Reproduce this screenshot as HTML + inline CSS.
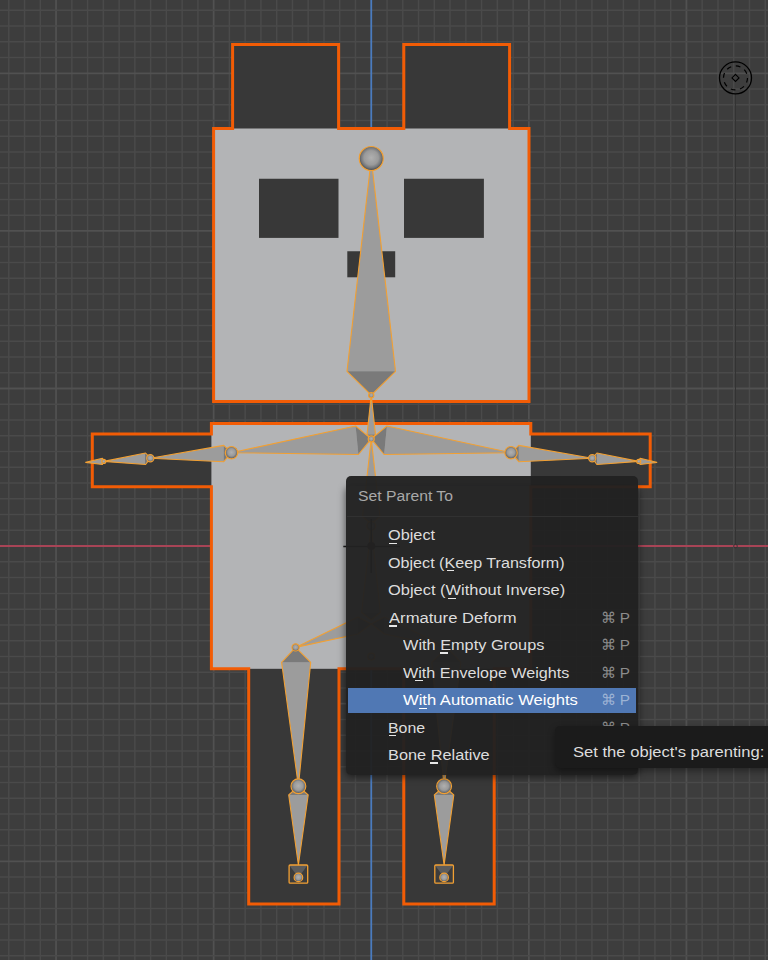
<!DOCTYPE html><html><head><meta charset="utf-8"><style>html,body{margin:0;padding:0;width:768px;height:960px;overflow:hidden;background:#3d3d3d}.t{position:absolute;font-family:"Liberation Sans",sans-serif;white-space:nowrap;line-height:1;}.mi{color:#e6e6e6;font-size:15.5px}u{text-decoration:underline;text-underline-offset:3px;text-decoration-thickness:1.2px}</style></head><body><svg width="768" height="960" viewBox="0 0 768 960" style="position:absolute;left:0;top:0"><defs><radialGradient id="sph" cx="0.5" cy="0.47" r="0.5"><stop offset="0" stop-color="#b0b0b0"/><stop offset="0.6" stop-color="#9a9a9a"/><stop offset="0.85" stop-color="#747679"/><stop offset="1" stop-color="#4e535a"/></radialGradient></defs><rect width="768" height="960" fill="#3d3d3d"/><line x1="-6.99" y1="0" x2="-6.99" y2="960" stroke="#4a4a4a" stroke-width="1.5"/><line x1="8.77" y1="0" x2="8.77" y2="960" stroke="#4a4a4a" stroke-width="1.5"/><line x1="24.53" y1="0" x2="24.53" y2="960" stroke="#4a4a4a" stroke-width="1.5"/><line x1="40.29" y1="0" x2="40.29" y2="960" stroke="#4a4a4a" stroke-width="1.5"/><line x1="56.05" y1="0" x2="56.05" y2="960" stroke="#515151" stroke-width="1.8"/><line x1="71.81" y1="0" x2="71.81" y2="960" stroke="#4a4a4a" stroke-width="1.5"/><line x1="87.57" y1="0" x2="87.57" y2="960" stroke="#4a4a4a" stroke-width="1.5"/><line x1="103.33" y1="0" x2="103.33" y2="960" stroke="#4a4a4a" stroke-width="1.5"/><line x1="119.09" y1="0" x2="119.09" y2="960" stroke="#4a4a4a" stroke-width="1.5"/><line x1="134.85" y1="0" x2="134.85" y2="960" stroke="#4a4a4a" stroke-width="1.5"/><line x1="150.61" y1="0" x2="150.61" y2="960" stroke="#4a4a4a" stroke-width="1.5"/><line x1="166.37" y1="0" x2="166.37" y2="960" stroke="#4a4a4a" stroke-width="1.5"/><line x1="182.13" y1="0" x2="182.13" y2="960" stroke="#4a4a4a" stroke-width="1.5"/><line x1="197.89" y1="0" x2="197.89" y2="960" stroke="#4a4a4a" stroke-width="1.5"/><line x1="213.65" y1="0" x2="213.65" y2="960" stroke="#515151" stroke-width="1.8"/><line x1="229.41" y1="0" x2="229.41" y2="960" stroke="#4a4a4a" stroke-width="1.5"/><line x1="245.17" y1="0" x2="245.17" y2="960" stroke="#4a4a4a" stroke-width="1.5"/><line x1="260.93" y1="0" x2="260.93" y2="960" stroke="#4a4a4a" stroke-width="1.5"/><line x1="276.69" y1="0" x2="276.69" y2="960" stroke="#4a4a4a" stroke-width="1.5"/><line x1="292.45" y1="0" x2="292.45" y2="960" stroke="#4a4a4a" stroke-width="1.5"/><line x1="308.21" y1="0" x2="308.21" y2="960" stroke="#4a4a4a" stroke-width="1.5"/><line x1="323.97" y1="0" x2="323.97" y2="960" stroke="#4a4a4a" stroke-width="1.5"/><line x1="339.73" y1="0" x2="339.73" y2="960" stroke="#4a4a4a" stroke-width="1.5"/><line x1="355.49" y1="0" x2="355.49" y2="960" stroke="#4a4a4a" stroke-width="1.5"/><line x1="387.01" y1="0" x2="387.01" y2="960" stroke="#4a4a4a" stroke-width="1.5"/><line x1="402.77" y1="0" x2="402.77" y2="960" stroke="#4a4a4a" stroke-width="1.5"/><line x1="418.53" y1="0" x2="418.53" y2="960" stroke="#4a4a4a" stroke-width="1.5"/><line x1="434.29" y1="0" x2="434.29" y2="960" stroke="#4a4a4a" stroke-width="1.5"/><line x1="450.05" y1="0" x2="450.05" y2="960" stroke="#4a4a4a" stroke-width="1.5"/><line x1="465.81" y1="0" x2="465.81" y2="960" stroke="#4a4a4a" stroke-width="1.5"/><line x1="481.57" y1="0" x2="481.57" y2="960" stroke="#4a4a4a" stroke-width="1.5"/><line x1="497.33" y1="0" x2="497.33" y2="960" stroke="#4a4a4a" stroke-width="1.5"/><line x1="513.09" y1="0" x2="513.09" y2="960" stroke="#4a4a4a" stroke-width="1.5"/><line x1="528.85" y1="0" x2="528.85" y2="960" stroke="#515151" stroke-width="1.8"/><line x1="544.61" y1="0" x2="544.61" y2="960" stroke="#4a4a4a" stroke-width="1.5"/><line x1="560.37" y1="0" x2="560.37" y2="960" stroke="#4a4a4a" stroke-width="1.5"/><line x1="576.13" y1="0" x2="576.13" y2="960" stroke="#4a4a4a" stroke-width="1.5"/><line x1="591.89" y1="0" x2="591.89" y2="960" stroke="#4a4a4a" stroke-width="1.5"/><line x1="607.65" y1="0" x2="607.65" y2="960" stroke="#4a4a4a" stroke-width="1.5"/><line x1="623.41" y1="0" x2="623.41" y2="960" stroke="#4a4a4a" stroke-width="1.5"/><line x1="639.17" y1="0" x2="639.17" y2="960" stroke="#4a4a4a" stroke-width="1.5"/><line x1="654.93" y1="0" x2="654.93" y2="960" stroke="#4a4a4a" stroke-width="1.5"/><line x1="670.69" y1="0" x2="670.69" y2="960" stroke="#4a4a4a" stroke-width="1.5"/><line x1="686.45" y1="0" x2="686.45" y2="960" stroke="#515151" stroke-width="1.8"/><line x1="702.21" y1="0" x2="702.21" y2="960" stroke="#4a4a4a" stroke-width="1.5"/><line x1="717.97" y1="0" x2="717.97" y2="960" stroke="#4a4a4a" stroke-width="1.5"/><line x1="733.73" y1="0" x2="733.73" y2="960" stroke="#4a4a4a" stroke-width="1.5"/><line x1="749.49" y1="0" x2="749.49" y2="960" stroke="#4a4a4a" stroke-width="1.5"/><line x1="765.25" y1="0" x2="765.25" y2="960" stroke="#4a4a4a" stroke-width="1.5"/><line x1="781.01" y1="0" x2="781.01" y2="960" stroke="#4a4a4a" stroke-width="1.5"/><line x1="0" y1="-5.5" x2="768" y2="-5.5" stroke="#4a4a4a" stroke-width="1.5"/><line x1="0" y1="10.26" x2="768" y2="10.26" stroke="#4a4a4a" stroke-width="1.5"/><line x1="0" y1="26.02" x2="768" y2="26.02" stroke="#4a4a4a" stroke-width="1.5"/><line x1="0" y1="41.78" x2="768" y2="41.78" stroke="#4a4a4a" stroke-width="1.5"/><line x1="0" y1="57.54" x2="768" y2="57.54" stroke="#4a4a4a" stroke-width="1.5"/><line x1="0" y1="73.3" x2="768" y2="73.3" stroke="#515151" stroke-width="1.8"/><line x1="0" y1="89.06" x2="768" y2="89.06" stroke="#4a4a4a" stroke-width="1.5"/><line x1="0" y1="104.82" x2="768" y2="104.82" stroke="#4a4a4a" stroke-width="1.5"/><line x1="0" y1="120.58" x2="768" y2="120.58" stroke="#4a4a4a" stroke-width="1.5"/><line x1="0" y1="136.34" x2="768" y2="136.34" stroke="#4a4a4a" stroke-width="1.5"/><line x1="0" y1="152.1" x2="768" y2="152.1" stroke="#4a4a4a" stroke-width="1.5"/><line x1="0" y1="167.86" x2="768" y2="167.86" stroke="#4a4a4a" stroke-width="1.5"/><line x1="0" y1="183.62" x2="768" y2="183.62" stroke="#4a4a4a" stroke-width="1.5"/><line x1="0" y1="199.38" x2="768" y2="199.38" stroke="#4a4a4a" stroke-width="1.5"/><line x1="0" y1="215.14" x2="768" y2="215.14" stroke="#4a4a4a" stroke-width="1.5"/><line x1="0" y1="230.9" x2="768" y2="230.9" stroke="#515151" stroke-width="1.8"/><line x1="0" y1="246.66" x2="768" y2="246.66" stroke="#4a4a4a" stroke-width="1.5"/><line x1="0" y1="262.42" x2="768" y2="262.42" stroke="#4a4a4a" stroke-width="1.5"/><line x1="0" y1="278.18" x2="768" y2="278.18" stroke="#4a4a4a" stroke-width="1.5"/><line x1="0" y1="293.94" x2="768" y2="293.94" stroke="#4a4a4a" stroke-width="1.5"/><line x1="0" y1="309.7" x2="768" y2="309.7" stroke="#4a4a4a" stroke-width="1.5"/><line x1="0" y1="325.46" x2="768" y2="325.46" stroke="#4a4a4a" stroke-width="1.5"/><line x1="0" y1="341.22" x2="768" y2="341.22" stroke="#4a4a4a" stroke-width="1.5"/><line x1="0" y1="356.98" x2="768" y2="356.98" stroke="#4a4a4a" stroke-width="1.5"/><line x1="0" y1="372.74" x2="768" y2="372.74" stroke="#4a4a4a" stroke-width="1.5"/><line x1="0" y1="388.5" x2="768" y2="388.5" stroke="#515151" stroke-width="1.8"/><line x1="0" y1="404.26" x2="768" y2="404.26" stroke="#4a4a4a" stroke-width="1.5"/><line x1="0" y1="420.02" x2="768" y2="420.02" stroke="#4a4a4a" stroke-width="1.5"/><line x1="0" y1="435.78" x2="768" y2="435.78" stroke="#4a4a4a" stroke-width="1.5"/><line x1="0" y1="451.54" x2="768" y2="451.54" stroke="#4a4a4a" stroke-width="1.5"/><line x1="0" y1="467.3" x2="768" y2="467.3" stroke="#4a4a4a" stroke-width="1.5"/><line x1="0" y1="483.06" x2="768" y2="483.06" stroke="#4a4a4a" stroke-width="1.5"/><line x1="0" y1="498.82" x2="768" y2="498.82" stroke="#4a4a4a" stroke-width="1.5"/><line x1="0" y1="514.58" x2="768" y2="514.58" stroke="#4a4a4a" stroke-width="1.5"/><line x1="0" y1="530.34" x2="768" y2="530.34" stroke="#4a4a4a" stroke-width="1.5"/><line x1="0" y1="561.86" x2="768" y2="561.86" stroke="#4a4a4a" stroke-width="1.5"/><line x1="0" y1="577.62" x2="768" y2="577.62" stroke="#4a4a4a" stroke-width="1.5"/><line x1="0" y1="593.38" x2="768" y2="593.38" stroke="#4a4a4a" stroke-width="1.5"/><line x1="0" y1="609.14" x2="768" y2="609.14" stroke="#4a4a4a" stroke-width="1.5"/><line x1="0" y1="624.9" x2="768" y2="624.9" stroke="#4a4a4a" stroke-width="1.5"/><line x1="0" y1="640.66" x2="768" y2="640.66" stroke="#4a4a4a" stroke-width="1.5"/><line x1="0" y1="656.42" x2="768" y2="656.42" stroke="#4a4a4a" stroke-width="1.5"/><line x1="0" y1="672.18" x2="768" y2="672.18" stroke="#4a4a4a" stroke-width="1.5"/><line x1="0" y1="687.94" x2="768" y2="687.94" stroke="#4a4a4a" stroke-width="1.5"/><line x1="0" y1="703.7" x2="768" y2="703.7" stroke="#515151" stroke-width="1.8"/><line x1="0" y1="719.46" x2="768" y2="719.46" stroke="#4a4a4a" stroke-width="1.5"/><line x1="0" y1="735.22" x2="768" y2="735.22" stroke="#4a4a4a" stroke-width="1.5"/><line x1="0" y1="750.98" x2="768" y2="750.98" stroke="#4a4a4a" stroke-width="1.5"/><line x1="0" y1="766.74" x2="768" y2="766.74" stroke="#4a4a4a" stroke-width="1.5"/><line x1="0" y1="782.5" x2="768" y2="782.5" stroke="#4a4a4a" stroke-width="1.5"/><line x1="0" y1="798.26" x2="768" y2="798.26" stroke="#4a4a4a" stroke-width="1.5"/><line x1="0" y1="814.02" x2="768" y2="814.02" stroke="#4a4a4a" stroke-width="1.5"/><line x1="0" y1="829.78" x2="768" y2="829.78" stroke="#4a4a4a" stroke-width="1.5"/><line x1="0" y1="845.54" x2="768" y2="845.54" stroke="#4a4a4a" stroke-width="1.5"/><line x1="0" y1="861.3" x2="768" y2="861.3" stroke="#515151" stroke-width="1.8"/><line x1="0" y1="877.06" x2="768" y2="877.06" stroke="#4a4a4a" stroke-width="1.5"/><line x1="0" y1="892.82" x2="768" y2="892.82" stroke="#4a4a4a" stroke-width="1.5"/><line x1="0" y1="908.58" x2="768" y2="908.58" stroke="#4a4a4a" stroke-width="1.5"/><line x1="0" y1="924.34" x2="768" y2="924.34" stroke="#4a4a4a" stroke-width="1.5"/><line x1="0" y1="940.1" x2="768" y2="940.1" stroke="#4a4a4a" stroke-width="1.5"/><line x1="0" y1="955.86" x2="768" y2="955.86" stroke="#4a4a4a" stroke-width="1.5"/><line x1="0" y1="971.62" x2="768" y2="971.62" stroke="#4a4a4a" stroke-width="1.5"/><line x1="0" y1="546.1" x2="768" y2="546.1" stroke="#a84456" stroke-width="2"/><line x1="371.25" y1="0" x2="371.25" y2="960" stroke="#4a7bbe" stroke-width="1.8"/><path d="M213.6,128.5 H232.6 V44.6 H338.6 V128.5 H403.8 V44.6 H509.6 V128.5 H529 V401.6 H213.6 Z" fill="#383838"/><rect x="213.6" y="128.5" width="315.4" height="273.1" fill="#b3b4b6"/><rect x="259" y="178.75" width="79.5" height="59.15" fill="#383838"/><rect x="404" y="178.75" width="79.9" height="59.15" fill="#383838"/><rect x="347.3" y="251.25" width="47.9" height="26.05" fill="#383838"/><path d="M211.4,423.4 H530.8 V434.1 H650.2 V486.8 H530.8 V668.8 H494.2 V904 H403.8 V668.8 H339 V904 H248.7 V668.8 H211.4 V486.8 H92.3 V434.1 H211.4 Z" fill="#383838"/><rect x="211.4" y="423.4" width="319.4" height="245.4" fill="#b3b4b6"/><path d="M213.6,128.5 H232.6 V44.6 H338.6 V128.5 H403.8 V44.6 H509.6 V128.5 H529 V401.6 H213.6 Z" fill="none" stroke="#f25c05" stroke-width="3"/><path d="M211.4,423.4 H530.8 V434.1 H650.2 V486.8 H530.8 V668.8 H494.2 V904 H403.8 V668.8 H339 V904 H248.7 V668.8 H211.4 V486.8 H92.3 V434.1 H211.4 Z" fill="none" stroke="#f25c05" stroke-width="3"/><polygon points="347,371.3 371.25,158.5 395.5,371.3" fill="#9c9c9c"/><polygon points="371.25,395.2 347,371.3 395.5,371.3" fill="#7a7a7a"/><polygon points="371.25,395.2 347,371.3 371.25,158.5 395.5,371.3" fill="none" stroke="#f2a033" stroke-width="1.1" stroke-linejoin="round"/><polygon points="367,434.6 371.25,395.2 375.5,434.6" fill="#9c9c9c"/><polygon points="371.25,438.9 367,434.6 375.5,434.6" fill="#7a7a7a"/><polygon points="371.25,438.9 367,434.6 371.25,395.2 375.5,434.6" fill="none" stroke="#f2a033" stroke-width="1.1" stroke-linejoin="round"/><polygon points="362.5,516.7 371.25,438.9 380,516.7" fill="#9c9c9c"/><polygon points="371.25,524 362.5,516.7 380,516.7" fill="#7a7a7a"/><polygon points="371.25,524 362.5,516.7 371.25,438.9 380,516.7" fill="none" stroke="#f2a033" stroke-width="1.1" stroke-linejoin="round"/><polygon points="361.6,612.5 371.25,526 380.3,612.5" fill="#9c9c9c"/><polygon points="371.25,620 361.6,612.5 380.3,612.5" fill="#7a7a7a"/><polygon points="371.25,620 361.6,612.5 371.25,526 380.3,612.5" fill="none" stroke="#f2a033" stroke-width="1.1" stroke-linejoin="round"/><polygon points="355.6,426 231.5,452.7 358.4,454.5" fill="#9c9c9c"/><polygon points="371.25,438.9 355.6,426 358.4,454.5" fill="#7a7a7a"/><polygon points="371.25,438.9 355.6,426 231.5,452.7 358.4,454.5" fill="none" stroke="#f2a033" stroke-width="1.1" stroke-linejoin="round"/><polygon points="386.9,426 511,452.7 384.1,454.5" fill="#9c9c9c"/><polygon points="371.25,438.9 386.9,426 384.1,454.5" fill="#7a7a7a"/><polygon points="371.25,438.9 386.9,426 511,452.7 384.1,454.5" fill="none" stroke="#f2a033" stroke-width="1.1" stroke-linejoin="round"/><polygon points="223.75,445.4 150.3,458.2 223.75,461.7" fill="#9c9c9c"/><polygon points="231.5,452.7 223.75,445.4 223.75,461.7" fill="#7a7a7a"/><polygon points="231.5,452.7 223.75,445.4 150.3,458.2 223.75,461.7" fill="none" stroke="#f2a033" stroke-width="1.1" stroke-linejoin="round"/><polygon points="518.75,445.4 592.2,458.2 518.75,461.7" fill="#9c9c9c"/><polygon points="511,452.7 518.75,445.4 518.75,461.7" fill="#7a7a7a"/><polygon points="511,452.7 518.75,445.4 592.2,458.2 518.75,461.7" fill="none" stroke="#f2a033" stroke-width="1.1" stroke-linejoin="round"/><polygon points="145.6,453 103.75,461.4 145.6,464.5" fill="#9c9c9c"/><polygon points="150.3,458.2 145.6,453 145.6,464.5" fill="#7a7a7a"/><polygon points="150.3,458.2 145.6,453 103.75,461.4 145.6,464.5" fill="none" stroke="#f2a033" stroke-width="1.1" stroke-linejoin="round"/><polygon points="596.9,453 638.75,461.4 596.9,464.5" fill="#9c9c9c"/><polygon points="592.2,458.2 596.9,453 596.9,464.5" fill="#7a7a7a"/><polygon points="592.2,458.2 596.9,453 638.75,461.4 596.9,464.5" fill="none" stroke="#f2a033" stroke-width="1.1" stroke-linejoin="round"/><polygon points="102.4,458.2 85.7,462.4 102.4,464.5" fill="#9c9c9c"/><polygon points="103.75,461.4 102.4,458.2 102.4,464.5" fill="#7a7a7a"/><polygon points="103.75,461.4 102.4,458.2 85.7,462.4 102.4,464.5" fill="none" stroke="#f2a033" stroke-width="1.1" stroke-linejoin="round"/><polygon points="640.1,458.2 656.8,462.4 640.1,464.5" fill="#9c9c9c"/><polygon points="638.75,461.4 640.1,458.2 640.1,464.5" fill="#7a7a7a"/><polygon points="638.75,461.4 640.1,458.2 656.8,462.4 640.1,464.5" fill="none" stroke="#f2a033" stroke-width="1.1" stroke-linejoin="round"/><polygon points="358,617 295.6,647.4 358,634" fill="#9c9c9c"/><polygon points="371.25,624 358,617 358,634" fill="#7a7a7a"/><polygon points="371.25,624 358,617 295.6,647.4 358,634" fill="none" stroke="#f2a033" stroke-width="1.1" stroke-linejoin="round"/><polygon points="384.5,617 446.9,647.4 384.5,634" fill="#9c9c9c"/><polygon points="371.25,624 384.5,617 384.5,634" fill="#7a7a7a"/><polygon points="371.25,624 384.5,617 446.9,647.4 384.5,634" fill="none" stroke="#f2a033" stroke-width="1.1" stroke-linejoin="round"/><polygon points="281.6,662.3 298.4,786.25 310.7,662.3" fill="#9c9c9c"/><polygon points="295.6,647.4 281.6,662.3 310.7,662.3" fill="#7a7a7a"/><polygon points="295.6,647.4 281.6,662.3 298.4,786.25 310.7,662.3" fill="none" stroke="#f2a033" stroke-width="1.1" stroke-linejoin="round"/><polygon points="460.9,662.3 444.1,786.25 431.8,662.3" fill="#9c9c9c"/><polygon points="446.9,647.4 460.9,662.3 431.8,662.3" fill="#7a7a7a"/><polygon points="446.9,647.4 460.9,662.3 444.1,786.25 431.8,662.3" fill="none" stroke="#f2a033" stroke-width="1.1" stroke-linejoin="round"/><polygon points="288.7,795 298.4,865 308.2,795" fill="#9c9c9c"/><polygon points="298.4,786.25 288.7,795 308.2,795" fill="#7a7a7a"/><polygon points="298.4,786.25 288.7,795 298.4,865 308.2,795" fill="none" stroke="#f2a033" stroke-width="1.1" stroke-linejoin="round"/><polygon points="453.8,795 444.1,865 434.3,795" fill="#9c9c9c"/><polygon points="444.1,786.25 453.8,795 434.3,795" fill="#7a7a7a"/><polygon points="444.1,786.25 453.8,795 444.1,865 434.3,795" fill="none" stroke="#f2a033" stroke-width="1.1" stroke-linejoin="round"/><circle cx="371.25" cy="158.5" r="12" fill="url(#sph)" stroke="#f2a033" stroke-width="1.2"/><circle cx="371.25" cy="395.2" r="2.6" fill="url(#sph)" stroke="#f2a033" stroke-width="1.2"/><circle cx="371.25" cy="438.9" r="3" fill="url(#sph)" stroke="#f2a033" stroke-width="1.2"/><circle cx="371.25" cy="526" r="4.5" fill="url(#sph)" stroke="#f2a033" stroke-width="1.2"/><circle cx="371.25" cy="656.6" r="3.5" fill="url(#sph)" stroke="#f2a033" stroke-width="1.2"/><circle cx="231.5" cy="452.7" r="6.2" fill="url(#sph)" stroke="#f2a033" stroke-width="1.2"/><circle cx="511" cy="452.7" r="6.2" fill="url(#sph)" stroke="#f2a033" stroke-width="1.2"/><circle cx="150.3" cy="458.2" r="3.6" fill="url(#sph)" stroke="#f2a033" stroke-width="1.2"/><circle cx="592.2" cy="458.2" r="3.6" fill="url(#sph)" stroke="#f2a033" stroke-width="1.2"/><circle cx="103.75" cy="461.4" r="2" fill="url(#sph)" stroke="#f2a033" stroke-width="1.2"/><circle cx="638.75" cy="461.4" r="2" fill="url(#sph)" stroke="#f2a033" stroke-width="1.2"/><circle cx="295.6" cy="647.4" r="3.6" fill="url(#sph)" stroke="#f2a033" stroke-width="1.2"/><circle cx="446.9" cy="647.4" r="3.6" fill="url(#sph)" stroke="#f2a033" stroke-width="1.2"/><circle cx="298.4" cy="786.25" r="7.4" fill="url(#sph)" stroke="#f2a033" stroke-width="1.2"/><circle cx="444.1" cy="786.25" r="7.4" fill="url(#sph)" stroke="#f2a033" stroke-width="1.2"/><rect x="289.1" y="865" width="18.6" height="18.2" fill="#3c3c3c"/><polygon points="289.1,865 307.7,865 298.4,877.4" fill="#5c5c5c"/><rect x="289.1" y="865" width="18.6" height="18.2" fill="none" stroke="#f2a033" stroke-width="1.3" rx="1"/><circle cx="298.4" cy="877.4" r="4.3" fill="url(#sph)" stroke="#f2a033" stroke-width="1.2"/><rect x="434.8" y="865" width="18.6" height="18.2" fill="#3c3c3c"/><polygon points="434.8,865 453.4,865 444.1,877.4" fill="#5c5c5c"/><rect x="434.8" y="865" width="18.6" height="18.2" fill="none" stroke="#f2a033" stroke-width="1.3" rx="1"/><circle cx="444.1" cy="877.4" r="4.3" fill="url(#sph)" stroke="#f2a033" stroke-width="1.2"/><line x1="343.3" y1="546.4" x2="400" y2="546.4" stroke="#1e1e1e" stroke-width="1.5"/><line x1="371.25" y1="519" x2="371.25" y2="573" stroke="#1e1e1e" stroke-width="1.5"/><circle cx="371.25" cy="546.1" r="4" fill="#3a2a2a"/><line x1="735.5" y1="94" x2="735.5" y2="544" stroke="#333333" stroke-width="1"/><circle cx="735.5" cy="546.1" r="1.8" fill="none" stroke="#333333" stroke-width="0.9"/><circle cx="735.5" cy="77.9" r="16" fill="none" stroke="#000" stroke-width="1.3"/><circle cx="735.5" cy="77.9" r="12" fill="none" stroke="#000" stroke-width="1.2" stroke-dasharray="4.71 4.71"/><polygon points="735.5,74.4 739,77.9 735.5,81.4 732,77.9" fill="none" stroke="#000" stroke-width="1.1"/></svg><div style="position:absolute;left:346.4px;top:486px;width:291.4px;height:288.6px;border-radius:6px;box-shadow:0 1px 7px 1px rgba(0,0,0,0.5)"></div><div style="position:absolute;left:346.4px;top:476.2px;width:291.4px;height:298.4px;border-radius:5px;background:rgba(33,33,33,0.96)"></div><div style="position:absolute;left:347px;top:515.5px;width:290.6px;height:1px;background:#313131"></div><div style="position:absolute;left:348px;top:688px;width:288px;height:24.6px;background:#5078b4"></div><div class="t" id="title" style="left:358.19px;top:487.8px;color:#a9a9a9;font-size:15.3px;transform:scaleX(1.0272);transform-origin:0 0">Set Parent To</div><div class="t" id="obj" style="left:388.48px;top:527.4px;color:#dddddd;font-size:15.3px;transform:scaleX(1.0648);transform-origin:0 0">Object</div><div class="t" id="keep" style="left:388.18px;top:554.7px;color:#dddddd;font-size:15.3px;transform:scaleX(1.0542);transform-origin:0 0">Object (Keep Transform)</div><div class="t" id="without" style="left:388.17px;top:582.2px;color:#dddddd;font-size:15.3px;transform:scaleX(1.0744);transform-origin:0 0">Object (Without Inverse)</div><div class="t" id="arm" style="left:388.6px;top:609.7px;color:#dddddd;font-size:15.3px;transform:scaleX(1.0872);transform-origin:0 0">Armature Deform</div><div class="t" id="empty" style="left:402.79px;top:637.2px;color:#dddddd;font-size:15.3px;transform:scaleX(1.0659);transform-origin:0 0">With Empty Groups</div><div class="t" id="env" style="left:402.79px;top:664.5px;color:#dddddd;font-size:15.3px;transform:scaleX(1.0533);transform-origin:0 0">With Envelope Weights</div><div class="t" id="auto" style="left:402.87px;top:692.2px;color:#ffffff;font-size:15.3px;transform:scaleX(1.0840);transform-origin:0 0">With Automatic Weights</div><div class="t" id="bone" style="left:388.18px;top:719.5px;color:#dddddd;font-size:15.3px;transform:scaleX(1.0400);transform-origin:0 0">Bone</div><div class="t" id="bonerel" style="left:388.17px;top:747.2px;color:#dddddd;font-size:15.3px;transform:scaleX(1.0670);transform-origin:0 0">Bone Relative</div><div style="position:absolute;left:388.75px;top:542.65px;width:8.15px;height:1.3px;background:#e6e6e6"></div><div style="position:absolute;left:446.5px;top:570.15px;width:7.6px;height:1.3px;background:#e6e6e6"></div><div style="position:absolute;left:448.3px;top:597.75px;width:8px;height:1.3px;background:#e6e6e6"></div><div style="position:absolute;left:388.75px;top:625.25px;width:7.95px;height:1.3px;background:#e6e6e6"></div><div style="position:absolute;left:439.8px;top:652.35px;width:8px;height:1.3px;background:#e6e6e6"></div><div style="position:absolute;left:415px;top:680.1px;width:7.7px;height:1.3px;background:#e6e6e6"></div><div style="position:absolute;left:419.4px;top:707.85px;width:8px;height:1.3px;background:#ffffff"></div><div style="position:absolute;left:388.75px;top:734.65px;width:7.55px;height:1.3px;background:#e6e6e6"></div><div style="position:absolute;left:430.3px;top:762.35px;width:8px;height:1.3px;background:#e6e6e6"></div><div class="t" style="left:600.5px;top:609.7px;color:#8c8c8c;font-size:15.3px">⌘ P</div><div class="t" style="left:600.5px;top:637.2px;color:#8c8c8c;font-size:15.3px">⌘ P</div><div class="t" style="left:600.5px;top:664.5px;color:#8c8c8c;font-size:15.3px">⌘ P</div><div class="t" style="left:600.5px;top:692.2px;color:rgba(255,255,255,0.45);font-size:15.3px">⌘ P</div><div class="t" style="left:600.5px;top:719.5px;color:#8c8c8c;font-size:15.3px">⌘ P</div><div style="position:absolute;left:554.5px;top:725.5px;width:240px;height:42.6px;border-radius:5px;background:#1b1b1b;box-shadow:0 3px 7px rgba(0,0,0,0.4)"></div><div class="t" id="tip" style="left:572.96px;top:743.8px;color:#dddddd;font-size:15.3px;transform:scaleX(1.0846);transform-origin:0 0">Set the object's parenting:</div></body></html>
